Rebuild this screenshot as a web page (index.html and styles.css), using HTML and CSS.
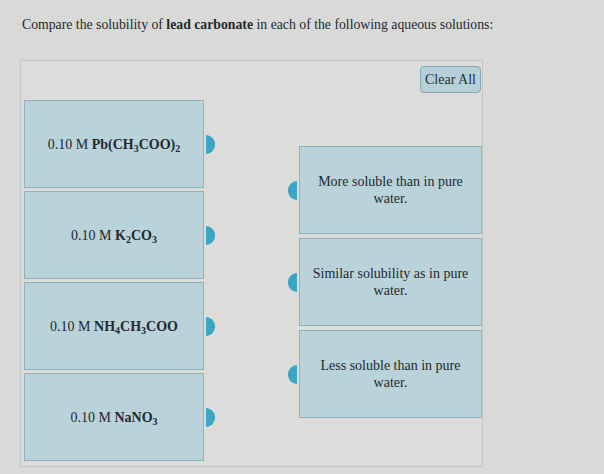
FILE: index.html
```html
<!DOCTYPE html>
<html lang="en">
<head>
<meta charset="UTF-8">
<title>Solubility matching</title>
<link rel="stylesheet" href="styles.css">
</head>
<body>
    <p class="question">Compare the solubility of <b>lead carbonate</b> in each of the following aqueous solutions:</p>

    <div class="match-panel">
        <div class="panel-top">
            <button class="clear-button">Clear All</button>
        </div>

        <div class="match-area">
            <div class="column sources">
                <div class="item">
                    <div class="card">0.10 M&nbsp;<b>Pb(CH<sub>3</sub>COO)<sub>2</sub></b></div>
                    <span class="knob knob-right"></span>
                </div>
                <div class="item">
                    <div class="card">0.10 M&nbsp;<b>K<sub>2</sub>CO<sub>3</sub></b></div>
                    <span class="knob knob-right"></span>
                </div>
                <div class="item">
                    <div class="card">0.10 M&nbsp;<b>NH<sub>4</sub>CH<sub>3</sub>COO</b></div>
                    <span class="knob knob-right"></span>
                </div>
                <div class="item">
                    <div class="card">0.10 M&nbsp;<b>NaNO<sub>3</sub></b></div>
                    <span class="knob knob-right"></span>
                </div>
            </div>

            <div class="column targets">
                <div class="item">
                    <span class="knob knob-left"></span>
                    <div class="card wide">More soluble than in pure water.</div>
                </div>
                <div class="item">
                    <span class="knob knob-left"></span>
                    <div class="card wide">Similar solubility as in pure water.</div>
                </div>
                <div class="item">
                    <span class="knob knob-left"></span>
                    <div class="card wide">Less soluble than in pure water.</div>
                </div>
            </div>
        </div>
    </div>
</body>
</html>
```

FILE: styles.css
```css
body {
    margin: 0;
    padding: 16px 0 0 22px;
    background-color: #d9dad8;
    color: #23292d;
    font-family: 'Liberation Serif', 'Times New Roman', serif;
    font-size: 14px;
}

.question {
    margin: 0;
    font-size: 13.75px;
    line-height: 18px;
}

.match-panel {
    width: 463px;
    height: 407px;
    margin: 26px 0 0 -2px;
    border: 1px solid #c4c6c5;
    background-color: #dcdddb;
    box-sizing: border-box;
}

.panel-top {
    display: flex;
    justify-content: flex-end;
    padding: 5px 1px 0 0;
}

.clear-button {
    width: 61px;
    height: 27px;
    padding: 0;
    background-color: #b5d0d9;
    border: 1px solid #86a5ae;
    border-radius: 4px;
    color: #263238;
    font-family: 'Liberation Serif', 'Times New Roman', serif;
    font-size: 14px;
}

.match-area {
    display: flex;
    padding: 7px 0 0 3px;
}

.column {
    display: flex;
    flex-direction: column;
    gap: 3px;
}

.targets {
    gap: 4px;
    margin: 46px 0 0 auto;
}

.item {
    display: flex;
    align-items: center;
}

.card {
    width: 180px;
    height: 88px;
    display: flex;
    align-items: center;
    justify-content: center;
    text-align: center;
    box-sizing: border-box;
    padding: 0 14px;
    background-color: #bad2da;
    border: 1px solid #8fb2bc;
    line-height: 17px;
}

.card.wide {
    width: 183px;
    padding: 0 10px;
}

.card sub {
    font-size: 10px;
    line-height: 0;
    vertical-align: -3px;
}

/* half-round drag handles */
.knob {
    width: 9px;
    height: 19px;
    background-color: #3aa6c3;
}

.knob-right {
    margin-left: 2px;
    border-radius: 0 10px 10px 0;
}

.knob-left {
    margin-right: 2px;
    border-radius: 10px 0 0 10px;
}
```
